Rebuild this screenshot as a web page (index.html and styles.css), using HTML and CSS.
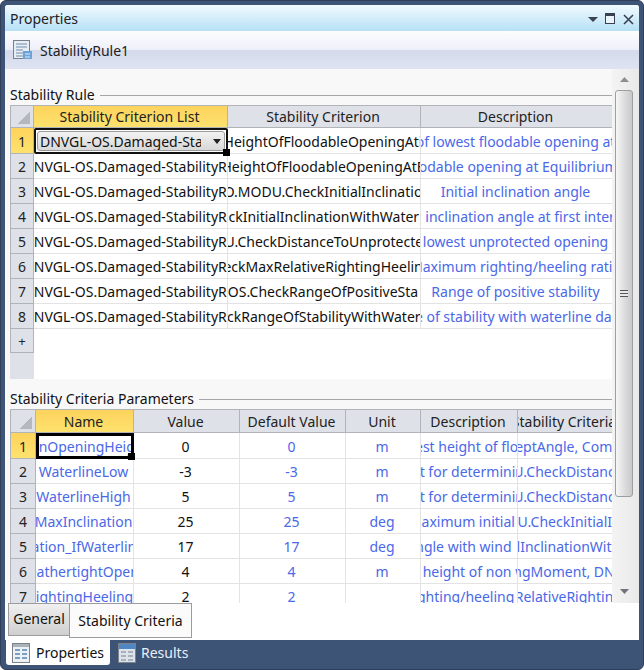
FILE: index.html
```html
<!DOCTYPE html>
<html lang="en">
<head>
<meta charset="utf-8">
<title>Properties</title>
<link rel="stylesheet" href="styles.css">
</head>
<body>
<div class="frame">
  <div class="window">
    <header class="titlebar">
      <span class="title">Properties</span>
      <div class="win-buttons">
        <svg width="10" height="6" viewBox="0 0 10 6"><path d="M0 1h10L5 6z" fill="#3a4252"/></svg>
        <svg width="11" height="12" viewBox="0 0 11 12"><rect x=".5" y=".5" width="9" height="10" fill="#eaf5fb" stroke="#3a4252"/><rect x="0" y="0" width="10" height="3" fill="#3a4252"/></svg>
        <svg width="11" height="11" viewBox="0 0 11 11"><path d="M1 1l9 9M10 1l-9 9" stroke="#3a4252" stroke-width="1.6" fill="none"/></svg>
      </div>
    </header>
    <div class="objectbar">
      <svg class="obj-icon" width="20" height="20" viewBox="0 0 20 20"><rect x=".5" y=".5" width="16" height="18" fill="#e8edf3" stroke="#77808c"/><path d="M3 4h11M3 7h11M3 10h7M3 13h7M3 16h7" stroke="#6f8db0" stroke-width="1.2"/><rect x="10" y="11" width="9" height="8" fill="#6ea3d8"/><path d="M12 14h5M12 17h5" stroke="#dfeefa"/></svg>
      <span class="obj-name">StabilityRule1</span>
    </div>
    <div class="body-row">
      <main class="content">
        <section class="group first">
          <div class="legend"><span>Stability Rule</span><i></i></div>
          <div class="sheet rule-sheet">
            <div class="corner"><b></b></div>
            <div class="ch sel">Stability Criterion List</div>
            <div class="ch">Stability Criterion</div>
            <div class="ch">Description</div>

            <div class="rh sel top">1</div>
            <div class="cell combo-cell"><div class="combo"><span>DNVGL-OS.Damaged-Stability</span><em></em></div><u class="handle"></u></div>
            <div class="cell top"><span>HeightOfFloodableOpeningAti</span></div>
            <div class="cell link top"><span>of lowest floodable opening at</span></div>

            <div class="rh">2</div>
            <div class="cell"><span>DNVGL-OS.Damaged-StabilityRu</span></div>
            <div class="cell"><span>HeightOfFloodableOpeningAtE</span></div>
            <div class="cell link"><span>floodable opening at Equilibrium a</span></div>

            <div class="rh">3</div>
            <div class="cell"><span>DNVGL-OS.Damaged-StabilityRu</span></div>
            <div class="cell"><span>O.MODU.CheckInitialInclinatio</span></div>
            <div class="cell link"><span>Initial inclination angle</span></div>

            <div class="rh">4</div>
            <div class="cell"><span>DNVGL-OS.Damaged-StabilityRu</span></div>
            <div class="cell"><span>CheckInitialInclinationWithWaterline</span></div>
            <div class="cell link"><span>Initial inclination angle at first intercepti</span></div>

            <div class="rh">5</div>
            <div class="cell"><span>DNVGL-OS.Damaged-StabilityRu</span></div>
            <div class="cell"><span>DU.CheckDistanceToUnprotected</span></div>
            <div class="cell link"><span>lowest unprotected opening</span></div>

            <div class="rh">6</div>
            <div class="cell"><span>DNVGL-OS.Damaged-StabilityRu</span></div>
            <div class="cell"><span>CheckMaxRelativeRightingHeelingR</span></div>
            <div class="cell link"><span>Maximum righting/heeling ratio</span></div>

            <div class="rh">7</div>
            <div class="cell"><span>DNVGL-OS.Damaged-StabilityRu</span></div>
            <div class="cell"><span>OS.CheckRangeOfPositiveSta</span></div>
            <div class="cell link"><span>Range of positive stability</span></div>

            <div class="rh">8</div>
            <div class="cell"><span>DNVGL-OS.Damaged-StabilityRu</span></div>
            <div class="cell"><span>CheckRangeOfStabilityWithWaterline</span></div>
            <div class="cell link"><span>ge of stability with waterline dam</span></div>

            <div class="rh add">+</div>
            <div class="blank"></div>
            <div class="stub"></div>
            <div class="blank"></div>
          </div>
        </section>
        <section class="group second">
          <div class="legend"><span>Stability Criteria Parameters</span><i></i></div>
          <div class="sheet param-sheet">
            <div class="corner"><b></b></div>
            <div class="ch sel">Name</div>
            <div class="ch">Value</div>
            <div class="ch">Default Value</div>
            <div class="ch">Unit</div>
            <div class="ch">Description</div>
            <div class="ch">Stability Criteria</div>

            <div class="rh sel top">1</div>
            <div class="cell link active"><span>tionOpeningHeight</span><u class="handle"></u></div>
            <div class="cell top"><span>0</span></div>
            <div class="cell link top"><span>0</span></div>
            <div class="cell link top"><span>m</span></div>
            <div class="cell link top"><span>Lowest height of floodin</span></div>
            <div class="cell link top"><span>ExceptAngle, Compar</span></div>

            <div class="rh">2</div>
            <div class="cell link"><span>WaterlineLow</span></div>
            <div class="cell"><span>-3</span></div>
            <div class="cell link"><span>-3</span></div>
            <div class="cell link"><span>m</span></div>
            <div class="cell link"><span>Limit for determining a</span></div>
            <div class="cell link"><span>U.CheckDistanc</span></div>

            <div class="rh">3</div>
            <div class="cell link"><span>WaterlineHigh</span></div>
            <div class="cell"><span>5</span></div>
            <div class="cell link"><span>5</span></div>
            <div class="cell link"><span>m</span></div>
            <div class="cell link"><span>Limit for determining a</span></div>
            <div class="cell link"><span>U.CheckDistanc</span></div>

            <div class="rh">4</div>
            <div class="cell link"><span>MaxInclination</span></div>
            <div class="cell"><span>25</span></div>
            <div class="cell link"><span>25</span></div>
            <div class="cell link"><span>deg</span></div>
            <div class="cell link"><span>Maximum initial h</span></div>
            <div class="cell link"><span>DU.CheckInitialIn</span></div>

            <div class="rh">5</div>
            <div class="cell link"><span>nation_IfWaterline</span></div>
            <div class="cell"><span>17</span></div>
            <div class="cell link"><span>17</span></div>
            <div class="cell link"><span>deg</span></div>
            <div class="cell link"><span>Angle with wind&nbsp;&nbsp;&nbsp;&nbsp;&nbsp;</span></div>
            <div class="cell link"><span>lInclinationWit</span></div>

            <div class="rh">6</div>
            <div class="cell link"><span>WeathertightOpenin</span></div>
            <div class="cell"><span>4</span></div>
            <div class="cell link"><span>4</span></div>
            <div class="cell link"><span>m</span></div>
            <div class="cell link"><span>Min height of non wea</span></div>
            <div class="cell link"><span>ngMoment, DN</span></div>

            <div class="rh">7</div>
            <div class="cell link"><span>RightingHeelings</span></div>
            <div class="cell"><span>2</span></div>
            <div class="cell link"><span>2</span></div>
            <div class="cell"></div>
            <div class="cell link"><span>Righting/heeling ra</span></div>
            <div class="cell link"><span>RelativeRightin</span></div>
          </div>
        </section>
      </main>
      <aside class="scrollbar">
        <svg class="arrow" width="9" height="5" viewBox="0 0 9 5"><path d="M0 5h9L4.500 0z" fill="#8a8f96"/></svg>
        <div class="thumb"><div class="grip"></div></div>
        <svg class="arrow down" width="9" height="5" viewBox="0 0 9 5"><path d="M0 0h9L4.500 5z" fill="#6f747b"/></svg>
      </aside>
    </div>
    <nav class="inner-tabs">
      <div class="itab">General</div>
      <div class="itab on">Stability Criteria</div>
    </nav>
  </div>
  <footer class="dock-tabs">
    <div class="dtab on">
      <svg width="18" height="20" viewBox="0 0 18 20"><rect x=".5" y=".5" width="17" height="19" fill="#eef1f4" stroke="#7c8288"/><rect x="1" y="1" width="16" height="3" fill="#aab2ba"/><path d="M3 7h5M10 7h5M3 11h5M10 11h5M3 15h5M10 15h5" stroke="#7aa0c4" stroke-width="2"/></svg>
      <span>Properties</span>
    </div>
    <div class="dtab">
      <svg width="18" height="20" viewBox="0 0 18 20"><rect x=".5" y=".5" width="17" height="19" fill="#dde3ea" stroke="#7c8288"/><rect x="1" y="1" width="16" height="5" fill="#4f86c4"/><path d="M3 9h5M10 9h5M3 13h5M10 13h5M3 17h5M10 17h5" stroke="#a9b2bc" stroke-width="2"/></svg>
      <span>Results</span>
    </div>
  </footer>
</div>
</body>
</html>
```

FILE: styles.css
```css
* { box-sizing: border-box; }
html, body { margin: 0; padding: 0; }
body { width: 644px; height: 670px; overflow: hidden; font-family: "Noto Sans", "Open Sans", sans-serif; font-size: 14px; color: #111; }

.frame { width: 644px; height: 670px; background: #3e5476; padding: 4px 4px 0; border: 1px solid #2f3f5a; border-radius: 6px; display: flex; flex-direction: column; }
.window { height: 635px; background: #fff; border-radius: 3px 3px 0 0; display: flex; flex-direction: column; flex: none; }

.titlebar { height: 26px; flex: none; display: flex; align-items: center; justify-content: space-between; padding: 2px 5px 0 5px; background: linear-gradient(#f2fafe, #b6e1f6); border-radius: 3px 3px 0 0; }
.title { line-height: 24px; color: #222; }
.win-buttons { display: flex; align-items: center; gap: 7px; }

.objectbar { height: 38px; flex: none; display: flex; align-items: center; gap: 7px; padding: 0 8px; background: linear-gradient(#fdfdff 0, #eef0f9 49%, #d5daec 50%, #dfe3f1 100%); }
.obj-name { color: #222; }

.body-row { height: 534px; flex: none; display: flex; background: #f8f8f9; overflow: hidden; }
.content { width: 607px; flex: none; padding-left: 5px; overflow: hidden; }
.group.first { padding-top: 16px; }
.group.second { padding-top: 10px; }
.legend { height: 20px; display: flex; align-items: center; gap: 5px; width: 602px; }
.legend span { line-height: 20px; }
.legend i { flex: 1; height: 1px; background: #a4a6a9; }

.sheet { display: grid; width: 603px; background: #fff; }
.rule-sheet { grid-template-columns: 24px 194px 193px 192px; grid-template-rows: 23px 26px repeat(7, 25px) 24px 26px; height: 274px; }
.param-sheet { grid-template-columns: 26px 98px 106px 106px 75px 97px 95px; grid-template-rows: 24px 26px repeat(6, 25px); height: 200px; }

.corner { background: #dee1e7; border: 1px solid #b0b3b8; display: flex; align-items: flex-end; justify-content: flex-end; padding: 3px; }
.corner b { width: 13px; height: 13px; background: linear-gradient(135deg, transparent 50%, #b4b8bf 50%); }
.ch { background: #dee1e7; border: 1px solid #b0b3b8; border-left: 0; padding-right: 2px; display: flex; align-items: center; justify-content: center; white-space: nowrap; overflow: hidden; color: #222; }
.ch.sel { background: linear-gradient(#fdd35c, #fde26e); }
.rh { background: #dee1e7; border: 1px solid #b0b3b8; border-top: 0; display: flex; align-items: center; justify-content: center; color: #222; }
.rh.sel { background: linear-gradient(#fdd35c, #fde26e); }
.rh.add { font-size: 13px; }

.cell { position: relative; display: flex; align-items: center; justify-content: center; white-space: nowrap; border-right: 1px solid #e3e3e3; border-bottom: 1px solid #e3e3e3; min-width: 0; overflow: hidden; color: #111; background: #fff; }
.cell span { flex: none; transform: translateX(-1px); }
.cell.link { color: #4a68e8; }
.top { padding-top: 2px; }
.blank { background: #fff; }
.rule-sheet .blank:nth-last-child(3) { grid-column: 2 / 5; }
.rule-sheet .stub { grid-column: 1; grid-row: 11; background: #dee1e7; }
.rule-sheet .blank:last-child { grid-column: 2 / 5; grid-row: 11; }

.combo-cell { overflow: visible; z-index: 2; justify-content: flex-start; border: 2px solid #111; border-radius: 2px; padding: 1px; background: #fff; }
.combo { width: 100%; height: 100%; display: flex; align-items: center; padding: 1px 3px 0 2px; background: linear-gradient(#f2f2f2, #d8d8d8); border: 1px solid #9a9a9a; border-radius: 3px; overflow: hidden; justify-content: space-between; }
.combo span { width: 161px; overflow: hidden; flex: none; transform: none; }
.combo em { width: 0; height: 0; border: 4px solid transparent; border-top: 5px solid #222; border-bottom: 0; flex: none; }
.handle { position: absolute; right: -4px; bottom: -4px; width: 7px; height: 7px; background: #000; border: 1px solid #000; }
.active { overflow: visible; z-index: 2; border: 3px solid #000; padding-top: 1px; }
.active span { display: flex; justify-content: center; width: 92px; overflow: hidden; transform: none; }

.scrollbar { width: 27px; flex: none; position: relative; background: linear-gradient(90deg, #f3f3f3, #e9e9e9); display: flex; flex-direction: column; align-items: center; border-left: 1px solid #f3f3f3; padding-right: 4px; }
.arrow { margin-top: 8px; flex: none; }
.thumb { width: 18px; height: 407px; margin-top: 8px; flex: none; border: 1px solid #9b9ea2; border-radius: 3px; background: linear-gradient(90deg, #f7f7f7, #dcdcdc 55%, #c9c9c9); display: flex; align-items: center; justify-content: center; }
.grip { width: 8px; height: 7px; background: repeating-linear-gradient(#555 0 1px, #e8e8e8 1px 3px); }
.arrow.down { margin-top: auto; margin-bottom: 9px; }

.inner-tabs { height: 37px; flex: none; display: flex; align-items: flex-start; padding-left: 3px; background: #fff; }
.itab { height: 33px; width: 62px; padding-bottom: 3px; display: flex; align-items: center; justify-content: center; background: linear-gradient(#f0f0f0, #cfcfcf); border: 1px solid #9c9c9c; color: #111; }
.itab.on { width: 123px; height: 35px; padding-bottom: 1px; margin-left: -1px; background: #fbfbfb; }

.dock-tabs { flex: 1; display: flex; align-items: flex-start; gap: 2px; color: #fff; padding-left: 1px; }
.dtab { height: 25px; padding: 0 4px 0 6px; display: flex; align-items: center; gap: 5px; color: #e9eef6; }
.dtab.on { width: 104px; gap: 6px; background: #fff; color: #111; border-radius: 0 0 3px 3px; }
```
